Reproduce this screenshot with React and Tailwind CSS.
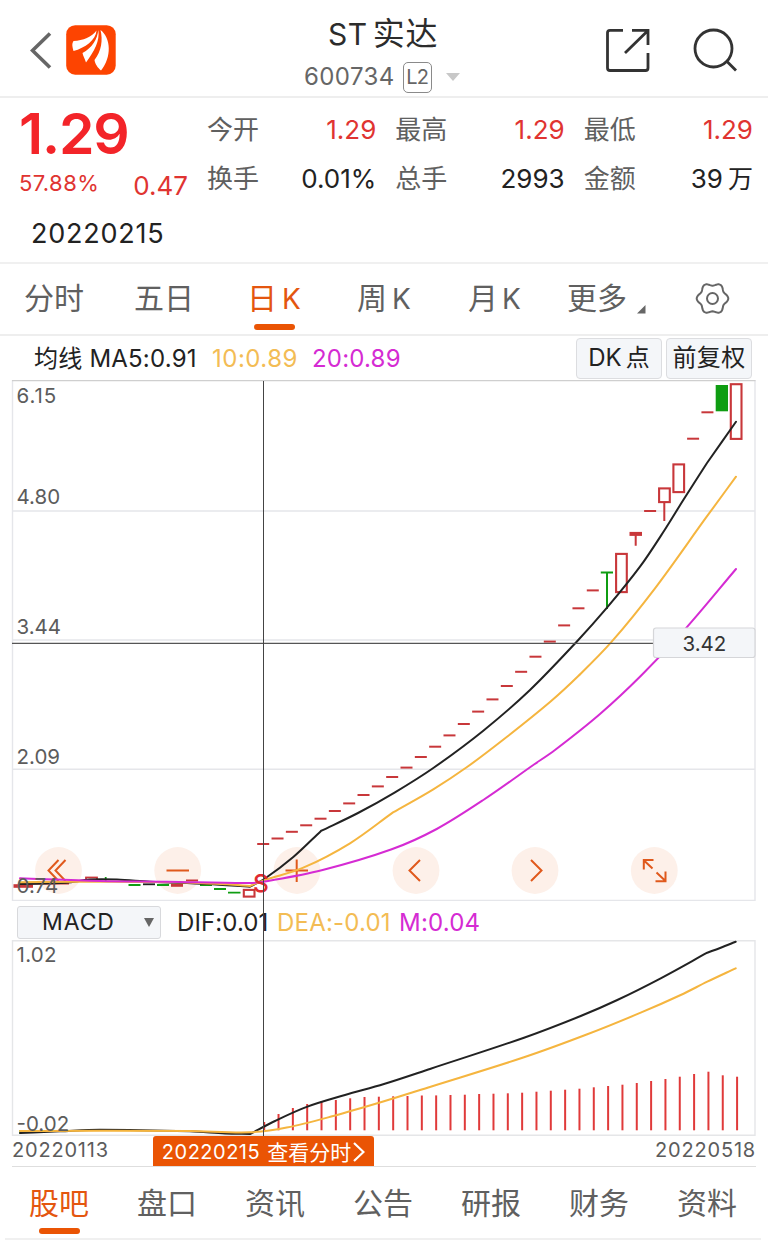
import React from "react";

const STEP = 14.33;
const RED = "#c8373a";
const GREEN = "#0f9d12";
const BLACK = "#222222";
const YELLOW = "#f5b53f";
const MAGENTA = "#d52bd3";

// Smooth curve through the points of one segment.
function curve(points) {
  let d = `M${points[0][0]} ${points[0][1]}`;
  for (let i = 0; i < points.length - 1; i++) {
    const p0 = points[i - 1] || points[i];
    const p1 = points[i];
    const p2 = points[i + 1];
    const p3 = points[i + 2] || p2;
    const h = (p2[0] - p1[0]) / 3;
    const m1 = (p2[1] - p0[1]) / (p2[0] - p0[0]);
    const m2 = (p3[1] - p1[1]) / (p3[0] - p1[0]);
    d += `C${p1[0] + h} ${p1[1] + m1 * h} ${p2[0] - h} ${p2[1] - m2 * h} ${p2[0]} ${p2[1]}`;
  }
  return d;
}

// Six-lobed outline of the settings icon.
const gearPath =
  "M" +
  Array.from({ length: 72 }, (_, i) => {
    const a = (i * Math.PI) / 36;
    const r = 14.3 + 1.5 * Math.cos(6 * a);
    return `${(r * Math.cos(a)).toFixed(2)} ${(r * Math.sin(a)).toFixed(2)}`;
  }).join("L") +
  "Z";

function Curve({ segments, color }) {
  return <path d={segments.map(curve).join("")} fill="none" stroke={color} strokeWidth="2" strokeLinejoin="round" strokeLinecap="round" />;
}

const limitUps = [
  844, 838.5, 831.8, 825.3, 818.7, 811, 803.4, 795, 786.4, 777, 767.6, 757, 746.7, 735.4, 724, 711.6,
  699.4, 686, 671.8, 656.7, 641.6, 625.4, 608.3, 590.4, null, null, null, 511, null, null, 438.7, 412.3,
];

const macdBars = [
  1122, 1114, 1108, 1104, 1101, 1100, 1098.3, 1097, 1096.7, 1096.3, 1096, 1095.5, 1095.4, 1095, 1094.7, 1094,
  1093.7, 1093.3, 1092.7, 1091.7, 1090.7, 1089.7, 1088.7, 1087.3, 1086, 1084.7, 1083, 1081, 1079, 1076.7,
  1074, 1071.7, 1075.3, 1076.7,
];

const ma5 = [
  [[20, 884], [66, 882.7], [90, 879.6], [117, 879.6], [150, 881.7], [207, 884], [250, 886.7]],
  [[250, 886.7], [265, 878.5], [293.3, 857], [321, 830.9]],
  [[321, 830.9], [358, 813], [395, 792.3], [433.3, 768], [483.3, 730.7], [530, 690], [576.7, 641.7], [607, 607.7], [640, 566.7], [664.3, 530.5], [683.3, 500], [707, 463]],
  [[707, 463], [736, 421.7]],
];
const ma10 = [
  [[20, 882.3], [80, 881.7], [167, 882], [227, 884.3], [250, 886]],
  [[250, 886], [265, 880], [303.3, 867.7], [350, 843.3], [393, 812.4]],
  [[393, 812.4], [433.3, 789.3], [466.7, 767.3], [506.7, 737], [550, 702], [578.3, 676], [611.7, 641.7], [655, 588.3], [706.7, 516.7], [736, 476.7]],
];
const ma20 = [
  [[20, 878.3], [100, 881], [166.7, 881.7], [250, 883], [268, 881], [321.7, 870.3], [391.7, 849.3], [436.7, 829], [483.3, 800], [534, 764.5]],
  [[534, 764.5], [555, 750], [600, 714], [641.7, 675], [686.7, 627.3], [736, 569]],
];
const dif = [
  [[20, 1133], [60, 1131.3], [100, 1129.7], [190, 1131.3], [225, 1133.4], [250, 1134]],
  [[250, 1134], [275, 1121], [306.7, 1106.9], [345, 1095], [384, 1084], [430.7, 1068.7], [524, 1037.7], [580.7, 1016], [617.3, 1000], [660.7, 978.3], [707.3, 952.7]],
  [[707.3, 952.7], [720.7, 947.7], [735.7, 941.7]],
];
const dea = [
  [[20, 1131], [100, 1130.7], [190, 1131], [250, 1132.3], [286.7, 1127.6], [333.3, 1116], [384, 1101.3], [430.7, 1086.7], [524, 1057.3], [587.3, 1034.3], [640.7, 1012.7], [680.7, 995], [707.3, 981.7], [735.7, 968.3]],
];

const labelFont = { fontFamily: "Inter, 'Noto Sans CJK SC', sans-serif", fontSize: 20.5, fontWeight: 380, fill: "#5c5c5c" };

function Header() {
  return (
    <header className="flex h-[98px] items-start border-b-2 border-[#eeeeee] pl-[30px] pr-[30px]">
      <svg className="mt-[31px] h-[40px] w-[22px]" viewBox="30 31 22 40" fill="none" stroke="#666" strokeWidth="3.6">
        <path d="M50 33.500L32.500 50.500L50 67.500" />
      </svg>
      <svg className="ml-[14px] mt-[25px] h-[50px] w-[50px]" viewBox="0 0 50 50">
        <rect width="49.500" height="49.500" x=".2" y=".2" rx="9" fill="#fd4401" />
        <path fill="#fff" d="M7.500 16C17 15.500 26 12 30.500 5.500C30 15 19 23 7.500 26C6.500 22 5.500 19 7.500 16Z" />
        <path fill="#fff" d="M32.300 5C34 16 28.500 26 20 37.500C19 34 17 31 16.500 28C26 23 31.500 14 32.300 5Z" />
        <path fill="#fff" d="M34.500 5C45 13 46 32 35 45.500C32 43 29 39 28.500 35C35.500 26 37 15 34.500 5Z" />
      </svg>
      <div className="ml-[148px] flex w-[240px] flex-col pt-[14px]">
        <div className="pl-[64px] text-[30px] leading-[40px] tracking-[0.6px] text-[#2c2c2c]">
          ST<span className="ml-[5px] text-[32px]">实达</span>
        </div>
        <div className="mt-[7px] flex h-[32px] items-center pl-[40px] text-[24px] text-[#666]">
          <span className="tracking-[0.4px]">600734</span>
          <span className="ml-[8px] flex h-[31px] w-[29px] items-center justify-center rounded-[5px] border border-[#8a8a8a] text-[20px] tracking-[-0.8px]">L2</span>
          <svg className="ml-[14px] h-[8px] w-[14px]" viewBox="0 0 14 8"><path d="M0 0H14L7 8Z" fill="#c8c8c8" /></svg>
        </div>
      </div>
      <svg className="ml-[100px] mt-[27px] h-[46px] w-[46px]" viewBox="604 27 46 46" fill="none" stroke="#333" strokeWidth="2.800">
        <path d="M623 30.300H610Q607.500 30.300 607.500 32.800V68Q607.500 70.500 610 70.500H645.500Q648 70.500 648 68V53M632 30.300H648V45M647.500 31L625 53" />
      </svg>
      <svg className="ml-auto mt-[27px] h-[46px] w-[46px]" viewBox="692 27 46 46" fill="none" stroke="#333" strokeWidth="2.800">
        <circle cx="713.500" cy="48.500" r="18.500" /><path d="M726.500 61L736 70.500" />
      </svg>
    </header>
  );
}

function Stat({ label, value, red, unit }) {
  return (
    <div className="flex h-[49px] items-center justify-between text-[26px] leading-none">
      <span className="text-[#606060]">{label}</span>
      <span className={red ? "text-[#e03431]" : "text-[#222]"}>
        {value}
        {unit && <span className="ml-[5px] text-[25px]">{unit}</span>}
      </span>
    </div>
  );
}

function Quote() {
  return (
    <section className="flex h-[166px] border-b-2 border-[#f0f0f0] pl-[19px] pr-[15px]">
      <div className="w-[188px]">
        <div className="mt-[6px] h-[60px] text-[57px] font-semibold leading-[60px] tracking-[-1.2px] text-[#f32429]">1.29</div>
        <div className="mt-[5px] flex h-[30px] w-[169px] items-center justify-between text-[#e03431]">
          <span className="mt-[-2px] text-[22px] leading-none tracking-[0.4px]">57.88%</span>
          <span className="mt-[4px] text-[26px] leading-none">0.47</span>
        </div>
        <div className="ml-[12px] mt-[17px] text-[27px] leading-[36px] tracking-[0.75px] text-[#222]">20220215</div>
      </div>
      <div className="grid flex-1 grid-cols-3 content-start gap-x-[19px] pt-[7px]">
        <Stat label="今开" value="1.29" red />
        <Stat label="最高" value="1.29" red />
        <Stat label="最低" value="1.29" red />
        <Stat label="换手" value="0.01%" />
        <Stat label="总手" value="2993" />
        <Stat label="金额" value="39" unit="万" />
      </div>
    </section>
  );
}

function PeriodTabs() {
  return (
    <nav className="flex h-[72px] border-b-2 border-[#eeeeee] pt-[14px] text-[30px] leading-[40px] text-[#606060]">
      <span className="ml-[24px] w-[110px]">分时</span>
      <span className="w-[113px]">五日</span>
      <span className="flex w-[110px] flex-col text-[#e4560f]">
        <span>日<span className="ml-[5px] text-[28px]">K</span></span>
        <span className="ml-[7px] mt-[5px] h-[6px] w-[41px] self-start rounded-full bg-[#ea5404]" />
      </span>
      <span className="w-[111px]">周<span className="ml-[5px] text-[28px]">K</span></span>
      <span className="w-[99px]">月<span className="ml-[4px] text-[28px]">K</span></span>
      <span className="w-[60px]">更多</span>
      <svg className="ml-[10px] mt-[27px] h-[9px] w-[9px]" viewBox="0 0 9 9"><path d="M8.500 0V8.500H0Z" fill="#666" /></svg>
      <svg className="ml-[48px] mt-[3px] h-[36px] w-[36px]" viewBox="-18.500 -17.500 36 36" fill="none" stroke="#666" strokeWidth="2">
        <path strokeLinejoin="round" d={gearPath} />
        <circle r="5.500" />
      </svg>
    </nav>
  );
}

function Candle({ x, y, h, fill = "#fff", color = RED }) {
  return <rect x={x - 5.2} y={y + 0.9} width="10.700" height={h - 1.8} fill={fill} stroke={color} strokeWidth="2.100" />;
}

function PriceChart() {
  return (
    <svg className="block h-[521px] w-full" viewBox="0 380 768 521">
      <g fill="none" stroke="#e5e6ea" strokeWidth="1.400">
        <path d="M12.500 380V900.500H755V380" />
        <path d="M13 511H755M13 640H755M13 769.300H755" />
      </g>
      <path d="M12 380.600H755.500" stroke="#cfcfcf" strokeWidth="1.300" />
      <g fill="#fdf0e9">
        {[58.5, 177.7, 297, 416, 535, 654.3].map((x) => <circle key={x} cx={x} cy="870.500" r="23.400" />)}
      </g>
      <g fill="none" stroke="#e0591c" strokeWidth="2">
        <path d="M58.500 860L48.500 870.500L58.500 881M65.500 860L55.500 870.500L65.500 881" />
        <path d="M166.500 870.500H189M285.500 870.500H308M296.700 859.500V882" />
        <path d="M420 860L409.500 870.500L420 881M531 860L541.500 870.500L531 881" />
        <path d="M643.800 869.500V860H653.500M644 860.500L652.500 868.500M665.500 871.500V881.300H655.500M665.500 881L656.500 872.500" />
      </g>
      <g strokeWidth="1.800">
        <path d="M13.500 886H33" stroke={RED} strokeWidth="3.600" />
        <path d="M33 883.500H69M186 880.500H198" stroke={RED} />
        <rect x="86" y="877.500" width="11" height="2.500" fill="none" stroke={RED} />
        <path d="M105.700 877V881M128.500 885H140.500M157 885H169M200 885H212M214 889H226M228 892.700H240.500" stroke={GREEN} />
        <path d="M143 884.300H155" stroke={BLACK} />
        <path d="M171 885.300H183" stroke={RED} strokeWidth="3" />
        <Candle x={249} y={889} h={8.5} />
        {limitUps.map((y, i) => y && <path key={i} d={`M${257.2 + i * STEP} ${y}h12`} stroke={RED} strokeWidth="2" />)}
        <path d="M600.800 572.500H613M607 572.500V609" stroke={GREEN} strokeWidth="2" />
        <Candle x={621.3} y={553} h={40} />
        <path d="M629.500 533.900H642" stroke={RED} strokeWidth="4" />
        <path d="M635.700 533V545.700M664.300 503V521" stroke={RED} strokeWidth="2" />
        <Candle x={664.3} y={487.500} h={15.5} />
        <Candle x={678.6} y={463.500} h={29.5} />
        <rect x="715.700" y="385" width="12.300" height="26.300" fill={GREEN} />
        <Candle x={736} y={383.300} h={56.500} />
      </g>
      <Curve segments={ma5} color={BLACK} />
      <Curve segments={ma10} color={YELLOW} />
      <Curve segments={ma20} color={MAGENTA} />
      <g style={labelFont}>
        <text x="16.500" y="403" letterSpacing="0.900">6.15</text>
        <text x="16.500" y="504">4.80</text>
        <text x="16.500" y="634">3.44</text>
        <text x="16.500" y="763.500">2.09</text>
        <text x="16.500" y="893">0.74</text>
      </g>
      <text x="253" y="892" style={{ ...labelFont, fontSize: 24.5, fill: "#e02b30", fontWeight: 500 }}>S</text>
      <path d="M12 643.400H654" stroke="#555" strokeWidth="1.100" />
      <rect x="653.500" y="628" width="101.500" height="29.500" rx="2.500" fill="#f4f6f9" stroke="#d5d6d9" strokeWidth="1.200" />
      <text x="682.500" y="651" style={{ ...labelFont, fill: "#333" }}>3.42</text>
    </svg>
  );
}

function MacdChart() {
  return (
    <svg className="block h-[197px] w-full" viewBox="0 939 768 197">
      <path d="M12.500 940.800H755V1135.300H12.500Z" fill="none" stroke="#e5e6e8" strokeWidth="1.400" />
      {macdBars.map((y, i) => <path key={i} d={`M${264.2 + i * STEP} ${y}V1130.300`} stroke="#e03a3a" strokeWidth="2" />)}
      <path d="M20.500 1130V1134" stroke={GREEN} strokeWidth="2" />
      <Curve segments={dif} color={BLACK} />
      <Curve segments={dea} color={YELLOW} />
      <g style={labelFont}>
        <text x="16.500" y="961.500" letterSpacing="0.300">1.02</text>
        <text x="16.500" y="1131">-0.02</text>
      </g>
    </svg>
  );
}

function Charts() {
  return (
    <section className="relative">
      <div className="flex h-[44px] items-center pl-[34px] pr-[16px] text-[24px] leading-none text-[#222]">
        <span className="mt-[2px] w-[163px] whitespace-nowrap tracking-[0.2px]">均线<span className="ml-[7px]">MA5:0.91</span></span>
        <span className="ml-[15px] mt-[2px] w-[86px] tracking-[0.5px] text-[#f3bc54]">10:0.89</span>
        <span className="ml-[14px] mt-[2px] tracking-[0.2px] text-[#d52bd3]">20:0.89</span>
        <button className="ml-auto h-[41px] w-[86px] rounded-[4px] border border-[#dcdde0] bg-[#f4f6f9] leading-none">
          DK<span className="ml-[4px]">点</span>
        </button>
        <button className="ml-[4px] h-[41px] w-[86px] whitespace-nowrap rounded-[4px] border border-[#dcdde0] bg-[#f4f6f9] leading-none tracking-[0.3px]">前复权</button>
      </div>
      <PriceChart />
      <div className="flex h-[38px] items-center pl-[17px] text-[24px] leading-none text-[#222]">
        <button className="mt-[4px] flex h-[33px] w-[144px] items-center justify-between rounded-[3px] border border-[#d8d9dc] bg-[#f4f6f9] pl-[24px] pr-[6px] text-[23px] tracking-[0.9px]">
          MACD
          <svg className="h-[9px] w-[10px]" viewBox="0 0 10 9"><path d="M0 0H10L5 9Z" fill="#666" /></svg>
        </button>
        <span className="ml-[16px] mt-[5px] w-[94px] whitespace-nowrap tracking-[0.1px]">DIF:0.01</span>
        <span className="ml-[6px] mt-[5px] w-[116px] whitespace-nowrap tracking-[0.2px] text-[#f3bc54]">DEA:-0.01</span>
        <span className="ml-[6px] mt-[5px] tracking-[0.2px] text-[#d52bd3]">M:0.04</span>
      </div>
      <MacdChart />
      <div className="absolute left-[263px] top-[45px] h-[755px] w-px bg-[#444]" />
      <div className="mx-[12px] flex h-[31px] border-b border-[#dedede] text-[20px] leading-[29px] text-[#5c5c5c]">
        <span className="w-[141px] tracking-[0.8px]">20220113</span>
        <button className="flex h-[30px] w-[221px] items-center justify-center rounded-t-[3px] bg-[#ea5404] pt-[2px] text-white">
          <span className="tracking-[0.5px]">20220215</span><span className="ml-[7px] text-[21px]">查看分时</span>
          <svg className="ml-[2px] h-[20px] w-[12px]" viewBox="0 0 12 20" fill="none" stroke="#fff" strokeWidth="2.200"><path d="M1 1L10.500 10L1 19" /></svg>
        </button>
        <span className="ml-auto tracking-[0.8px]">20220518</span>
      </div>
    </section>
  );
}

function BottomTabs() {
  const items = ["股吧", "盘口", "资讯", "公告", "研报", "财务", "资料"];
  return (
    <nav className="ml-[5px] mr-[7px] grid h-[73px] grid-cols-7 border-b-2 border-[#f0f0f0] pt-[16px] text-[30px] leading-[40px] text-[#606060]">
      {items.map((t, i) => (
        <span key={t} className={i === 0 ? "flex flex-col items-center text-[#e4560f]" : "flex flex-col items-center"}>
          {t}
          {i === 0 && <span className="mt-[5px] h-[6px] w-[41px] rounded-full bg-[#ea5404]" />}
        </span>
      ))}
    </nav>
  );
}

export default function App() {
  return (
    <div className="h-[1250px] w-[768px] overflow-hidden bg-white font-[Inter,'Noto_Sans_CJK_SC',sans-serif] font-[380]">
      <Header />
      <Quote />
      <PeriodTabs />
      <Charts />
      <BottomTabs />
    </div>
  );
}
